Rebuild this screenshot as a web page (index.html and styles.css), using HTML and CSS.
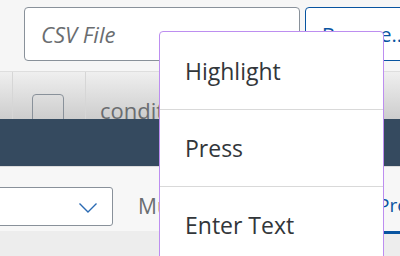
FILE: index.html
```html
<!DOCTYPE html>
<html lang="en">
<head>
<meta charset="utf-8">
<title>Menu</title>
<link rel="stylesheet" href="styles.css">
</head>
<body>
<div class="page">
  <div class="toolbar">
    <div class="file-input">CSV File</div>
    <button class="browse">Browse...</button>
  </div>
  <div class="table-head">
    <div class="cell cell-select"><span class="checkbox"></span></div>
    <div class="cell cell-cond">conditions</div>
  </div>
  <div class="shell-bar"></div>
  <div class="filter-bar">
    <div class="select">
      <svg class="chevron" width="18" height="10" viewBox="0 0 18 10"><path d="M0.5 0.5 L9 9 L17.5 0.5" fill="none" stroke="currentColor" stroke-width="1.4"/></svg>
    </div>
    <span class="label">Multi</span>
    <span class="tab">Process</span>
  </div>
  <div class="footer-band"></div>
  <ul class="menu">
    <li class="menu-item">Highlight</li>
    <li class="menu-item">Press</li>
    <li class="menu-item">Enter Text</li>
  </ul>
</div>
</body>
</html>
```
FILE: styles.css
```css
* { box-sizing: border-box; }
html, body { margin: 0; padding: 0; }
body {
  width: 400px;
  height: 256px;
  overflow: hidden;
  font-family: "Open Sans", "Noto Sans", sans-serif;
  background: #f7f7f7;
}
.page {
  position: relative;
  width: 400px;
  height: 256px;
  overflow: hidden;
}
.toolbar {
  display: flex;
  gap: 5px;
  height: 71px;
  padding: 7px 0 0 24px;
  background: #f6f6f6;
}
.file-input {
  flex: 0 0 276px;
  height: 54px;
  background: #fff;
  border: 1px solid #89919a;
  border-radius: 4px;
  padding: 11px 0 0 16px;
  font-size: 22px;
  font-style: italic;
  color: #6a6d70;
}
.browse {
  flex: 0 0 120px;
  height: 54px;
  background: #fff;
  border: 1px solid #0854a0;
  border-radius: 4px;
  padding: 0 0 0 16px;
  text-align: left;
  font-family: inherit;
  font-size: 20px;
  color: #0854a0;
}
.table-head {
  display: flex;
  height: 48px;
  overflow: hidden;
  border-top: 1px solid #dedede;
  background: linear-gradient(#efefef, #cdcdcd);
  padding-left: 12px;
}
.cell {
  border-left: 1px solid #d6d6d6;
  height: 47px;
}
.cell-select {
  flex: 0 0 73px;
  padding: 22px 0 0 19px;
}
.checkbox {
  display: block;
  width: 32px;
  height: 32px;
  border: 1px solid #89919a;
  border-radius: 4px;
}
.cell-cond {
  flex: 1;
  padding: 23px 0 0 14px;
  font-size: 22px;
  color: #6a6d70;
  white-space: nowrap;
}
.shell-bar {
  height: 48px;
  background: #354a5f;
  border-bottom: 1px solid #dcdcdc;
}
.filter-bar {
  display: flex;
  align-items: flex-start;
  height: 67px;
  background: linear-gradient(#f7f7f7 64px, #ededed 64px);
}
.select {
  flex: 0 0 140px;
  margin: 20px 0 0 -27px;
  height: 39px;
  background: #fff;
  border: 1px solid #89919a;
  border-radius: 3px;
  display: flex;
  justify-content: flex-end;
  align-items: center;
  padding-right: 15px;
  color: #2a6ab3;
}
.chevron { display: block; margin-top: 2px; }
.label {
  margin: 25px 0 0 25px;
  font-size: 21px;
  color: #6a6d70;
  line-height: 28px;
  white-space: nowrap;
}
.tab {
  margin-left: auto;
  flex: 0 0 22px;
  align-self: stretch;
  padding-top: 25px;
  font-size: 19px;
  color: #0854a0;
  white-space: nowrap;
  overflow: hidden;
  border-bottom: 3px solid #0854a0;
}
.footer-band {
  height: 30px;
  background: #ededed;
}
.menu {
  position: absolute;
  left: 159px;
  top: 31px;
  width: 225px;
  height: 240px;
  margin: 0;
  padding: 0;
  list-style: none;
  background: #fff;
  border: 1px solid #bd8ef0;
  border-radius: 4px 4px 0 0;
}
.menu-item {
  display: flex;
  align-items: center;
  height: 77px;
  padding-left: 25px;
  font-size: 23px;
  color: #32363a;
  border-bottom: 1px solid #d9d9d9;
}
.menu-item:first-child { height: 78px; }
```
